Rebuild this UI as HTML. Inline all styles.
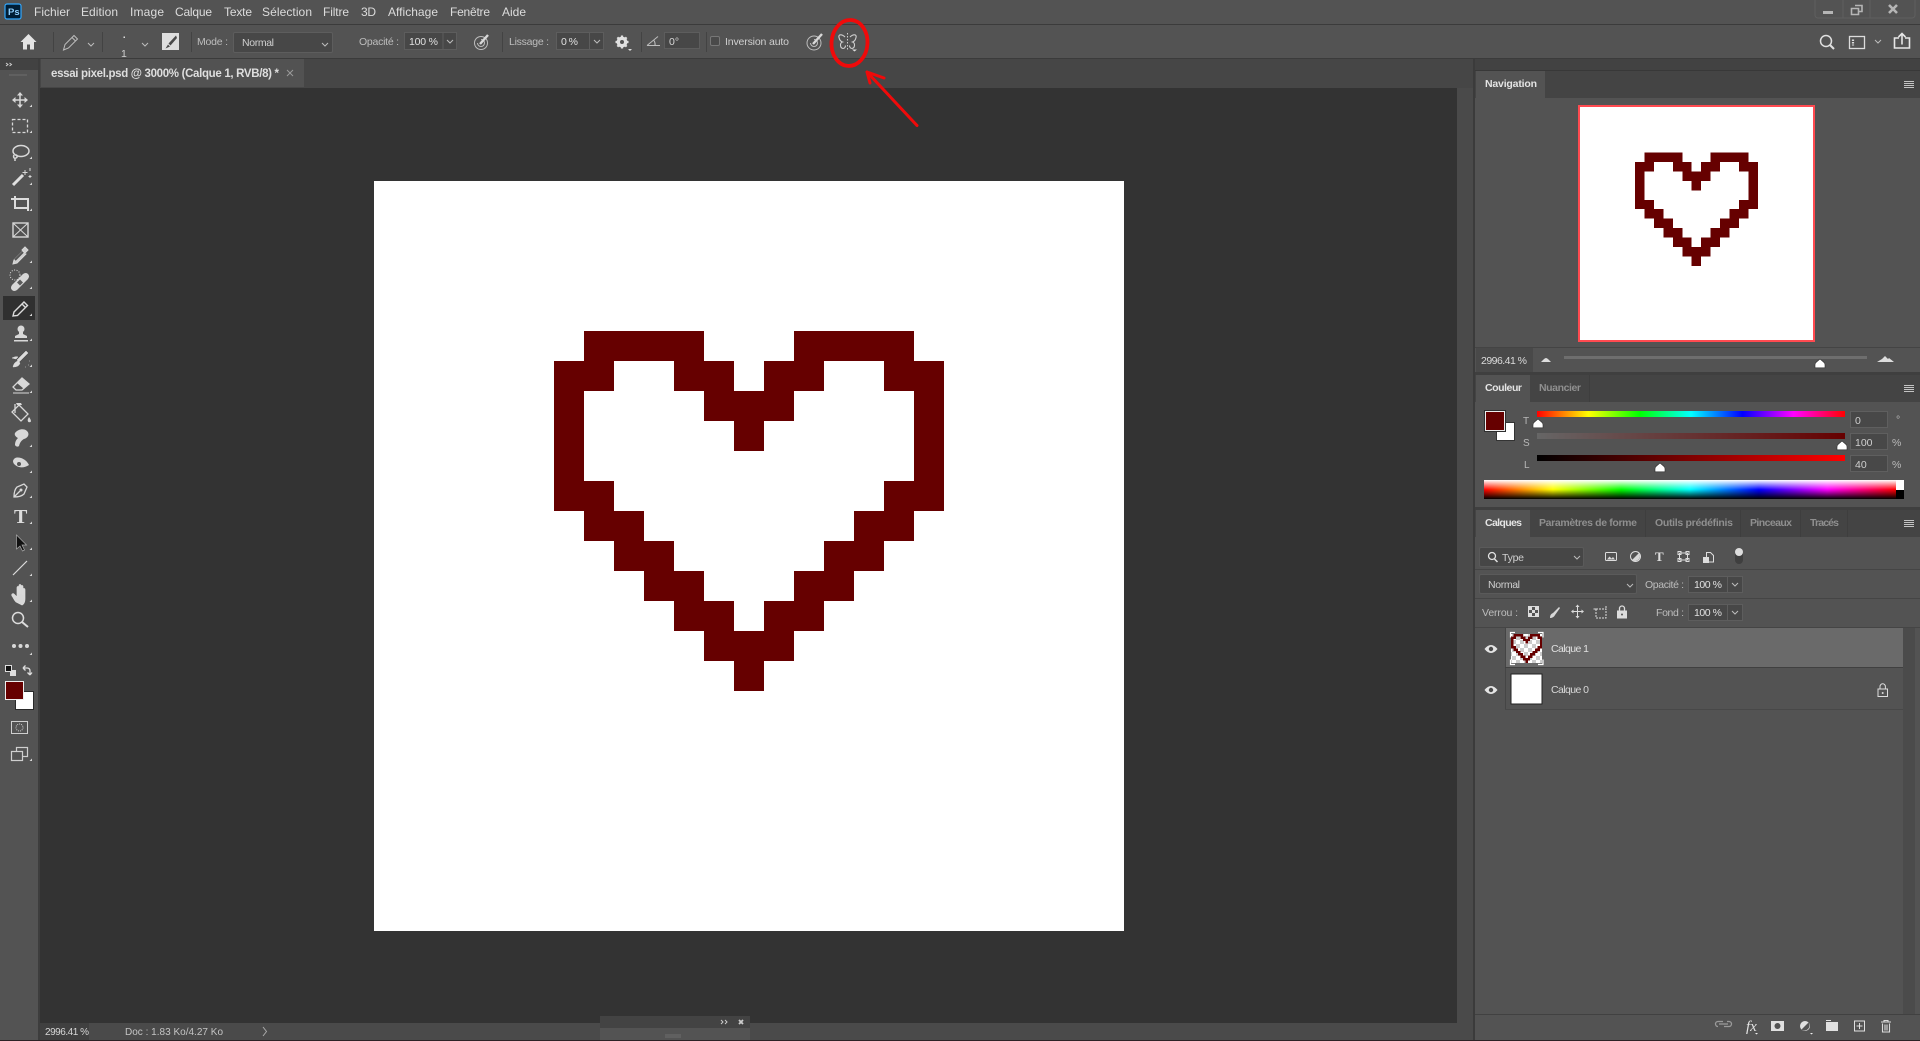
<!DOCTYPE html>
<html lang="fr"><head><meta charset="utf-8"><title>essai pixel.psd</title>
<style>
html,body{margin:0;padding:0;background:#535353;overflow:hidden}
svg{display:block;position:absolute;left:0;top:0}
text{font-family:"Liberation Sans",sans-serif;font-size:11px;fill:#cfcfcf;white-space:pre}
.m{font-size:12px;fill:#dcdcdc}
.b{font-weight:bold}
.d{fill:#8f8f8f;font-weight:bold;font-size:10.5px}
.i{fill:none;stroke:#d8d8d8;stroke-width:1.5}
.f{fill:#d8d8d8}
.c{fill:none;stroke:#bdbdbd;stroke-width:1}
</style></head><body>
<svg width="1920" height="1041" viewBox="0 0 1920 1041" xmlns="http://www.w3.org/2000/svg">
<defs>
<path id="h" shape-rendering="crispEdges" d="M1 0h4v1h-4zM8 0h4v1h-4zM0 1h2v1h-2zM4 1h2v1h-2zM7 1h2v1h-2zM11 1h2v1h-2zM0 2h1v1h-1zM5 2h3v1h-3zM12 2h1v1h-1zM0 3h1v1h-1zM6 3h1v1h-1zM12 3h1v1h-1zM0 4h1v1h-1zM12 4h1v1h-1zM0 5h2v1h-2zM11 5h2v1h-2zM1 6h2v1h-2zM10 6h2v1h-2zM2 7h2v1h-2zM9 7h2v1h-2zM3 8h2v1h-2zM8 8h2v1h-2zM4 9h2v1h-2zM7 9h2v1h-2zM5 10h3v1h-3zM6 11h1v1h-1z"/>
<linearGradient id="hue"><stop offset="0" stop-color="#f00"/><stop offset=".167" stop-color="#ff0"/><stop offset=".333" stop-color="#0f0"/><stop offset=".5" stop-color="#0ff"/><stop offset=".667" stop-color="#00f"/><stop offset=".833" stop-color="#f0f"/><stop offset="1" stop-color="#f00"/></linearGradient>
<linearGradient id="sat"><stop offset="0" stop-color="#666"/><stop offset="1" stop-color="#600"/></linearGradient>
<linearGradient id="lum"><stop offset="0" stop-color="#000"/><stop offset="1" stop-color="#f00"/></linearGradient>
<linearGradient id="wb" x1="0" y1="0" x2="0" y2="1"><stop offset="0" stop-color="#fff"/><stop offset=".5" stop-color="#fff" stop-opacity="0"/><stop offset=".5" stop-color="#000" stop-opacity="0"/><stop offset="1" stop-color="#000"/></linearGradient>
<pattern id="chk" width="8" height="8" patternUnits="userSpaceOnUse"><rect width="8" height="8" fill="#fff"/><rect width="4" height="4" fill="#ccc"/><rect x="4" y="4" width="4" height="4" fill="#ccc"/></pattern>
<path id="s" d="M0 0l-3.500 3q-1.500 1.200-1.500 2.800v3h10v-3q0-1.600-1.500-2.800z"/>
<g id="menu"><path d="M0 .5h10M0 2.500h10M0 4.500h10M0 6.500h10" stroke="#c4c4c4" fill="none"/></g>
</defs>

<rect width="1920" height="1041" fill="#535353"/>
<!-- bars -->
<rect y="24" width="1920" height="1" fill="#3b3b3b"/>
<rect y="58" width="1920" height="1" fill="#3b3b3b"/>
<rect y="59" width="38" height="11" fill="#424242"/>
<rect x="38" y="59" width="1435" height="29" fill="#464646"/>
<rect x="41" y="59" width="263" height="28" fill="#525252"/>
<rect x="38" y="59" width="2" height="982" fill="#3d3d3d"/>
<rect x="40" y="88" width="1417" height="935" fill="#333333"/>
<rect x="1457" y="88" width="16" height="952" fill="#4a4a4a"/>
<rect x="40" y="1023" width="1417" height="17" fill="#4a4a4a"/>
<rect x="40" y="1023" width="49" height="17" fill="#404040"/>
<rect x="1473" y="59" width="2" height="982" fill="#3b3b3b"/>
<rect y="1040" width="1920" height="1" fill="#2c2226"/>

<!-- canvas -->
<rect x="374" y="181" width="750" height="750" fill="#fff"/>
<use href="#h" transform="translate(554 331) scale(30)" fill="#660000"/>

<!-- title bar -->
<rect x="5" y="4" width="16" height="15" rx="2" fill="#001e36" stroke="#31a8ff" stroke-width="1.2"/>
<text x="8" y="15" style="font-size:9.5px;fill:#8fd0ff;font-weight:bold">Ps</text>
<g class="t">
<text class="m" x="34" y="16" textLength="36">Fichier</text>
<text class="m" x="81" y="16" textLength="37">Edition</text>
<text class="m" x="130" y="16" textLength="34">Image</text>
<text class="m" x="175" y="16" textLength="37">Calque</text>
<text class="m" x="224" y="16" textLength="28">Texte</text>
<text class="m" x="262" y="16" textLength="50">Sélection</text>
<text class="m" x="323" y="16" textLength="26">Filtre</text>
<text class="m" x="361" y="16" textLength="15">3D</text>
<text class="m" x="388" y="16" textLength="50">Affichage</text>
<text class="m" x="450" y="16" textLength="40">Fenêtre</text>
<text class="m" x="502" y="16" textLength="24">Aide</text>
</g>
<!-- window buttons -->
<path d="M1815 0v15a3 3 0 0 0 3 3h94a3 3 0 0 0 3-3v-15M1843 0v18M1870 0v18" fill="none" stroke="#5f5f5f"/>
<rect x="1823" y="11" width="10" height="3" fill="#b5b5b5"/>
<path d="M1855 5.5h7v6h-3M1851.5 8.5h7v6h-7z" fill="none" stroke="#b5b5b5" stroke-width="1.6"/>
<path d="M1889 5l8 8M1897 5l-8 8" stroke="#b5b5b5" stroke-width="2.6" fill="none"/>

<!-- options bar -->
<path d="M28.5 34L20.5 42H23V49.5H27V44.5H30V49.5H34V42H36.5Z" fill="#e4e4e4"/>
<path d="M53.5 32v20M102.5 32v20M191.5 32v20M502.5 32v20M641.5 32v20M706.5 32v20" stroke="#434343"/>
<path d="M63.5 50L65 44.5L74 35.5L77.5 39L68.5 48Z M72 37.5l3.5 3.5" class="c" stroke-width="1.2"/>
<path d="M88 43l3 3 3-3M142 43l3 3 3-3" class="c"/>
<rect x="123.5" y="36.5" width="1.5" height="1.5" fill="#ddd"/>
<text x="121" y="57" style="font-size:10.5px">1</text>
<rect x="162" y="33" width="17" height="17" fill="#dedede"/>
<path d="M176 35.5L168.5 43.5L170.5 45.5L177 38Z M168 44.5l2 2-4.5 2z" fill="#4a4a4a"/>
<text x="197" y="45" textLength="31" style="fill:#bdbdbd;font-size:10.5px">Mode :</text>
<rect x="233.5" y="32.5" width="99" height="20" rx="1.5" fill="#474747" stroke="#5d5d5d"/>
<text x="242" y="46" textLength="32" style="font-size:10.5px">Normal</text>
<path d="M322 43l3 3 3-3" class="c"/>
<text x="359" y="45" textLength="40" style="fill:#bdbdbd;font-size:10.5px">Opacité :</text>
<rect x="404.5" y="32.5" width="52" height="17" fill="#474747" stroke="#5d5d5d"/>
<path d="M443 33v16" stroke="#5d5d5d"/>
<text x="409" y="45" textLength="29" style="font-size:10.5px;fill:#e0e0e0">100 %</text>
<path d="M447 40l3 3 3-3" class="c"/>
<circle cx="481" cy="43" r="6.5" class="c" stroke-width="1.4"/><path d="M477.5 43a3.5 3.5 0 1 0 3.5-3.5" class="c"/>
<path d="M480 44L488 35" stroke="#d8d8d8" stroke-width="2.4" fill="none"/>
<text x="509" y="45" textLength="40" style="fill:#bdbdbd;font-size:10.5px">Lissage :</text>
<rect x="556.5" y="32.5" width="47" height="17" fill="#474747" stroke="#5d5d5d"/>
<path d="M589.5 33v16" stroke="#5d5d5d"/>
<text x="561" y="45" textLength="17" style="font-size:10.5px;fill:#e0e0e0">0 %</text>
<path d="M594 40l3 3 3-3" class="c"/>
<circle cx="622" cy="42" r="3.8" fill="none" stroke="#e0e0e0" stroke-width="3.2"/>
<path d="M622 35.5v13M615.5 42h13M617.4 37.4l9.2 9.2M626.6 37.4l-9.2 9.2" stroke="#e0e0e0" stroke-width="2.2"/>
<circle cx="622" cy="42" r="2" fill="#535353"/>
<path d="M628 49h4l-2 2z" fill="#ddd"/>
<path d="M647 45.5h13M647 45.5L658 36.5M654 40.5q1.5 2.5 1 5" class="c"/>
<rect x="664.5" y="32.5" width="35" height="16" fill="#474747" stroke="#5d5d5d"/>
<text x="669" y="45" style="font-size:10.5px;fill:#d8d8d8">0°</text>
<rect x="710.5" y="36.5" width="9" height="9" rx="1.5" fill="#4a4a4a" stroke="#777"/>
<text x="725" y="45" textLength="64" style="font-size:10.5px">Inversion auto</text>
<circle cx="814" cy="43" r="7" class="c" stroke-width="1.4"/><path d="M810.5 43a3.5 3.5 0 1 0 3.5-3.5" class="c"/>
<path d="M813 44L822 34" stroke="#d8d8d8" stroke-width="2.4" fill="none"/>
<path d="M847.5 33v18" stroke="#ccc" stroke-dasharray="1.5 1.5"/>
<path d="M845 37C842 34 838 34 839 37.5C839.5 40 841 41.5 842.5 42C839.5 43 840 48 843 48.5C844.5 48.5 845.5 47 845.5 45.5M850 37C853 34 857 34 856 37.5C855.5 40 854 41.5 852.5 42C855.5 43 855 48 852 48.5C850.5 48.5 849.5 47 849.5 45.5" fill="none" stroke="#cfcfcf" stroke-width="1.1"/>
<path d="M852 49.5h5l-2.5 2z" fill="#ddd"/>
<!-- right options -->
<circle cx="1826" cy="41" r="5.5" fill="none" stroke="#e0e0e0" stroke-width="1.5"/><path d="M1830 45l4 4" stroke="#e0e0e0" stroke-width="2"/>
<rect x="1849.5" y="36.5" width="15" height="12" fill="none" stroke="#dcdcdc" stroke-width="1.3"/><path d="M1853 39.5v6" stroke="#dcdcdc" stroke-width="2.2" stroke-dasharray="1.5 1"/>
<path d="M1875 40l3 3 3-3" class="c"/>
<path d="M1899 38h-4.500v10h15v-10h-4.500M1902 44.500v-11M1898.500 37l3.500-3.500 3.500 3.500" fill="none" stroke="#e6e6e6" stroke-width="1.6"/>

<!-- tab -->
<text x="51" y="77" class="b" textLength="228" style="font-size:11.5px;fill:#dedede">essai pixel.psd @ 3000% (Calque 1, RVB/8) *</text>
<path d="M287 70l6 6M293 70l-6 6" stroke="#9a9a9a"/>

<!-- collapse arrows -->
<path d="M6 63l2 1.500-2 1.500M9.500 63l2 1.500-2 1.500M1906 62l2.500 2.500-2.500 2.500M1910 62l2.500 2.500-2.500 2.500" stroke="#cfcfcf" fill="none"/>
<path d="M10 74v2M12 74v2M14 74v2M16 74v2M18 74v2M20 74v2M22 74v2M24 74v2M26 74v2" stroke="#6c6c6c"/>

<!-- toolbar -->
<rect x="3" y="296" width="32" height="24" fill="#303030"/>
<g class="f" stroke="none">
<path d="M32 107h-2.500l2.500-2.500z M32 133h-2.500l2.500-2.500z M32 159h-2.500l2.500-2.500z M32 185h-2.500l2.500-2.500z M32 211h-2.500l2.500-2.500z M32 263h-2.500l2.500-2.500z M32 289h-2.500l2.500-2.500z M32 316h-2.500l2.500-2.500z M32 341h-2.500l2.500-2.500z M32 367h-2.500l2.500-2.500z M32 393h-2.500l2.500-2.500z M32 447h-2.500l2.500-2.500z M32 473h-2.500l2.500-2.500z M32 498h-2.500l2.500-2.500z M32 524h-2.500l2.500-2.500z M32 550h-2.500l2.500-2.500z M32 576h-2.500l2.500-2.500z M32 602h-2.500l2.500-2.500z M32 655h-2.500l2.500-2.500z M32 761h-2.500l2.500-2.500z"/>
</g>
<!-- move -->
<path d="M20 93v14M13 100h14" class="i"/><path d="M20 92l-3 3.500h6zM20 108l-3-3.500h6zM12 100l3.500-3v6zM28 100l-3.500-3v6z" class="f"/>
<!-- marquee -->
<rect x="12.500" y="119.500" width="15" height="13" fill="none" stroke="#d8d8d8" stroke-width="1.300" stroke-dasharray="3 2"/>
<!-- lasso -->
<ellipse cx="21" cy="151" rx="8" ry="5.500" class="i" stroke-width="1.300"/><path d="M14 155c-1 2 0 4 2 3s1-3 0-3M15 158v3" class="i" stroke-width="1.100"/>
<!-- wand -->
<path d="M13 185l10-10" stroke="#e0e0e0" stroke-width="3"/><path d="M25 170v5M22.500 172.500h5M30 175v3M28.500 176.500h3M30 168v3" stroke="#d8d8d8"/>
<!-- crop -->
<path d="M11 199h17v12M15 196v12h13" fill="none" stroke="#dcdcdc" stroke-width="2"/>
<!-- frame -->
<rect x="13" y="223" width="15" height="14" fill="none" stroke="#d8d8d8" stroke-width="1.400"/><path d="M13 223l15 14M28 223l-15 14" stroke="#d8d8d8"/>
<!-- eyedropper -->
<path d="M13 264l1-4 9-9 3 3-9 9zM22 250l3-3 3 3-3 3z" fill="#cfcfcf" stroke="#d8d8d8"/><path d="M15 260l8-8" stroke="#535353" stroke-width="2"/>
<!-- heal -->
<path d="M12 285l11-11q3-2 5 0t0 5l-11 11q-3 2-5 0t0-5z" class="f"/>
<circle cx="15" cy="275" r="5" fill="none" stroke="#ddd" stroke-dasharray="1 1.500"/>
<path d="M17 282.500l3-3 3 3-3 3z" fill="#5a5a5a"/>
<!-- pencil active -->
<path d="M13 316L14 312L24 302L27.500 305.500L17.500 315.500Z M22 304l3.500 3.500" fill="none" stroke="#dcdcdc" stroke-width="1.400"/>
<!-- stamp -->
<circle cx="21" cy="329" r="3.500" class="f"/><path d="M19 332h4v2l4 2v2h-12v-2l4-2zM14 340h14v1.500h-14z" class="f"/>
<!-- mixer -->
<path d="M28 353L19 362L17 360L26 351Z M13 367q1-5 5-6l2 2q-1 4-7 4zM12 358q4-2 6-1l-2 2zM25 367h1M28 365h1M29 361h1" fill="#dcdcdc" stroke="#dcdcdc" stroke-width=".5"/>
<!-- eraser -->
<path d="M22 378L29 384L22 390H16L13 387Z" fill="none" stroke="#d8d8d8" stroke-width="1.300"/><path d="M22 378L29 384L24 389L17 383Z" class="f"/><path d="M13 393h16" stroke="#d8d8d8"/>
<!-- bucket -->
<path d="M19 405L28 414L21 421L12 412Z" fill="none" stroke="#d8d8d8" stroke-width="1.300"/><path d="M15 404v9" stroke="#d8d8d8" stroke-width="1.300"/><path d="M29 417q-2 3-1 4.500t3 0q0-2-2-4.500z" class="f"/><path d="M16 403h5l1 2h-5z" class="f"/>
<!-- smudge -->
<path d="M15 433c3-4 9-5 12-2s1 7-3 8c-2 1-4 3-5 7-1 1-3 1-4-1 0-3 1-5 3-7-2-1-4-3-3-5z" class="f"/>
<!-- sponge -->
<path d="M13 461c1-4 5-4 8-3s6 3 8 7c-3 2-7 3-10 2s-6-3-6-6z" class="f"/><circle cx="19" cy="464" r="2" fill="#555"/>
<!-- pen -->
<path d="M14 497c0-4 1-8 3-10l7-3 3 3-3 7c-2 2-6 3-10 3z M14 497l6-6" fill="none" stroke="#d8d8d8" stroke-width="1.300"/><circle cx="21" cy="490" r="1.500" class="f"/>
<!-- T -->
<text x="14" y="523" style="font-family:'Liberation Serif',serif;font-size:20px;font-weight:bold;fill:#dcdcdc">T</text>
<!-- arrow black -->
<path d="M16.500 535v14l3.500-3 2.500 5 2-1-2.500-5h4.500z" fill="#111" stroke="#aaa" stroke-width=".7"/>
<!-- line -->
<path d="M13 575l14-14" stroke="#dcdcdc" stroke-width="1.200"/>
<!-- hand -->
<path d="M16 602c-2-2-3-5-4-6-1-2 1-3 2-2l3 3v-9c0-2 2-2 2 0v6-8c0-2 2-2 2 0v8-7c0-2 2-2 2 0v8-5c0-2 2-2 2 0v9c0 3-1 5-3 6z" class="f" stroke="#dcdcdc" stroke-width=".7"/>
<!-- zoom -->
<circle cx="18" cy="618" r="5.500" fill="none" stroke="#dcdcdc" stroke-width="1.500"/><path d="M22 622l6 5" stroke="#dcdcdc" stroke-width="2"/>
<!-- dots -->
<circle cx="14" cy="646" r="2" class="f"/><circle cx="20.500" cy="646" r="2" class="f"/><circle cx="27" cy="646" r="2" class="f"/>
<!-- default colours -->
<rect x="10" y="670" width="6" height="6" fill="#ddd"/><rect x="5.500" y="665.500" width="6" height="6" fill="#111" stroke="#ddd"/>
<path d="M23 668h4q3 0 3 3v3M23 668l2.500-2.500M23 668l2.500 2.500M30 675l-2.500-2.500M30 675l2-2.500" fill="none" stroke="#dcdcdc" stroke-width="1.300"/>
<rect x="15.500" y="691.500" width="18" height="18" fill="#fff" stroke="#2a2a2a"/>
<rect x="5.500" y="681.500" width="18" height="18" fill="#660000" stroke="#eee"/>
<!-- mask -->
<rect x="11.500" y="721.500" width="16" height="12" fill="none" stroke="#cfcfcf"/><circle cx="19.500" cy="727.500" r="3.500" fill="none" stroke="#cfcfcf" stroke-dasharray="1 1"/>
<!-- screen -->
<rect x="16.500" y="747.500" width="11" height="9" fill="none" stroke="#cfcfcf" stroke-width="1.200"/><rect x="11.500" y="751.500" width="11" height="9" fill="#535353" stroke="#cfcfcf" stroke-width="1.200"/>

<!-- status bar -->
<text x="45" y="1035" textLength="44" style="font-size:10px;fill:#d6d6d6">2996.41 %</text>
<text x="125" y="1035" textLength="98" style="font-size:10px;fill:#c4c4c4">Doc : 1.83 Ko/4.27 Ko</text>
<path d="M263 1027l3.500 4.500-3.500 4.500" fill="none" stroke="#aaa"/>
<!-- timeline collapsed -->
<rect x="600" y="1016" width="150" height="24" fill="#535353"/>
<rect x="600" y="1016" width="150" height="12" fill="#434343"/>
<path d="M721 1020l2 2-2 2M725 1020l2 2-2 2" stroke="#ccc" fill="none"/>
<path d="M739 1020l4 4M743 1020l-4 4" stroke="#ccc" stroke-width="1.800"/>
<path d="M666 1034v4M668 1034v4M670 1034v4M672 1034v4M674 1034v4M676 1034v4M678 1034v4M680 1034v4" stroke="#6c6c6c"/>

<!-- right dock -->
<rect x="1475" y="59" width="445" height="11" fill="#424242"/>
<rect x="1475" y="70" width="445" height="1" fill="#383838"/>
<rect x="1475" y="71" width="445" height="27" fill="#444444"/>
<rect x="1476" y="71" width="69" height="28" fill="#535353"/>
<text x="1485" y="87" class="b" textLength="52" style="font-size:10.500px;fill:#e4e4e4">Navigation</text>
<use href="#menu" x="1904" y="81"/>
<!-- navigator -->
<rect x="1579" y="106" width="235" height="235" fill="#fff" stroke="#ff4a50" stroke-width="2"/>
<use href="#h" transform="translate(1635 152.500) scale(9.450)" fill="#660000"/>
<rect x="1475" y="347" width="445" height="1" fill="#444"/>
<rect x="1476" y="348" width="57" height="24" fill="#494949"/>
<text x="1481" y="364" textLength="46" style="font-size:10.500px;fill:#dcdcdc">2996.41 %</text>
<path d="M1541 362l2.500-2.500q1.500-1.500 2.500-1.500t2.500 1.500l2.500 2.500z" fill="#ddd"/>
<rect x="1564" y="356" width="303" height="3" fill="#6e6e6e"/>
<use href="#s" x="1820" y="359" fill="#fff" stroke="#2c2c2c" stroke-width=".6"/>
<path d="M1877 362l5-3 3-3 3 3 1-1 5 4z" fill="#ddd"/>
<rect x="1475" y="372" width="445" height="3" fill="#3f3f3f"/>
<!-- colour -->
<rect x="1475" y="375" width="445" height="27" fill="#444444"/>
<rect x="1476" y="375" width="54" height="28" fill="#535353"/>
<text x="1485" y="391" class="b" textLength="37" style="font-size:10.500px;fill:#e4e4e4">Couleur</text>
<text x="1539" y="391" class="d" textLength="42">Nuancier</text>
<path d="M1589.500 375v27" stroke="#3e3e3e"/>
<use href="#menu" x="1904" y="385"/>
<rect x="1496.500" y="422.500" width="18" height="18" fill="#fff" stroke="#333"/>
<rect x="1485.500" y="411.500" width="19" height="19" fill="#660000" stroke="#eee"/>
<rect x="1484.500" y="410.500" width="21" height="21" fill="none" stroke="#2e2e2e"/>
<text x="1523" y="424" style="font-size:10px;fill:#b8b8b8">T</text>
<text x="1523" y="446" style="font-size:10px;fill:#b8b8b8">S</text>
<text x="1524" y="468" style="font-size:10px;fill:#b8b8b8">L</text>
<rect x="1537" y="411" width="308" height="6" fill="url(#hue)"/>
<rect x="1537" y="433" width="308" height="6" fill="url(#sat)"/>
<rect x="1537" y="455" width="308" height="6" fill="url(#lum)"/>
<use href="#s" x="1538" y="419" fill="#fff" stroke="#2c2c2c" stroke-width=".6"/>
<use href="#s" x="1842" y="441" fill="#fff" stroke="#2c2c2c" stroke-width=".6"/>
<use href="#s" x="1660" y="463" fill="#fff" stroke="#2c2c2c" stroke-width=".6"/>
<g fill="#484848" stroke="#5f5f5f"><rect x="1850.500" y="411.500" width="37" height="16"/><rect x="1850.500" y="433.500" width="37" height="16"/><rect x="1850.500" y="455.500" width="37" height="16"/></g>
<g style="font-size:10px"><text x="1855" y="424" style="font-size:10.500px">0</text><text x="1855" y="446" style="font-size:10.500px">100</text><text x="1855" y="468" style="font-size:10.500px">40</text><text x="1896" y="423" style="font-size:10.500px;fill:#bbb">°</text><text x="1892" y="446" style="font-size:10.500px;fill:#bbb">%</text><text x="1892" y="468" style="font-size:10.500px;fill:#bbb">%</text></g>
<rect x="1484" y="480" width="412" height="19" fill="url(#hue)"/>
<rect x="1484" y="480" width="412" height="19" fill="url(#wb)"/>
<rect x="1896" y="480" width="8" height="10" fill="#fff"/><rect x="1896" y="490" width="8" height="9" fill="#000"/>
<rect x="1475" y="507" width="445" height="3" fill="#3f3f3f"/>
<!-- layers tabs -->
<rect x="1475" y="510" width="445" height="27" fill="#444444"/>
<rect x="1476" y="510" width="54" height="28" fill="#535353"/>
<text x="1485" y="526" class="b" textLength="37" style="font-size:10.500px;fill:#e4e4e4">Calques</text>
<text x="1539" y="526" class="d" textLength="98">Paramètres de forme</text>
<text x="1655" y="526" class="d" textLength="78">Outils prédéfinis</text>
<text x="1750" y="526" class="d" textLength="42">Pinceaux</text>
<text x="1810" y="526" class="d" textLength="29">Tracés</text>
<path d="M1645.500 510v27M1740.500 510v27M1800.500 510v27M1847.500 510v27" stroke="#3e3e3e"/>
<use href="#menu" x="1904" y="520"/>
<!-- filter row -->
<rect x="1479.500" y="547.500" width="104" height="19" rx="1.500" fill="#464646" stroke="#5a5a5a"/>
<circle cx="1492" cy="556" r="3.500" fill="none" stroke="#e0e0e0" stroke-width="1.300"/><path d="M1494.500 559l3 3" stroke="#e0e0e0" stroke-width="1.500"/>
<text x="1502" y="561" textLength="22" style="font-size:10.500px">Type</text>
<path d="M1574 556l3 3 3-3" class="c"/>
<rect x="1605.500" y="552.500" width="11" height="8" rx="1" fill="none" stroke="#ddd"/><path d="M1607 559.500l2.500-3 2 2 1.500-1.500 2 2.500z" class="f"/>
<circle cx="1635.500" cy="556.500" r="5" fill="none" stroke="#ddd"/><path d="M1639 553a5 5 0 0 1-7 7z" class="f"/>
<text x="1655" y="561" class="b" style="font-family:'Liberation Serif',serif;font-size:13px;fill:#e0e0e0">T</text>
<path d="M1679.500 553h8M1679.500 560h8M1679.500 553v7M1687.500 553v7" fill="none" stroke="#ddd"/><path d="M1678 551.500h3v3h-3zM1686 551.500h3v3h-3zM1678 558.500h3v3h-3zM1686 558.500h3v3h-3z" fill="none" stroke="#ddd"/>
<path d="M1706.500 552.500h4l3 3v6.500h-7z" fill="none" stroke="#ddd"/><rect x="1703" y="557" width="6" height="6" fill="#ddd"/>
<rect x="1735" y="548" width="8" height="16" rx="4" fill="#3f3f3f"/><circle cx="1739" cy="552" r="4" fill="#ddd"/>
<rect x="1475" y="569" width="445" height="1" fill="#454545"/>
<!-- blend row -->
<rect x="1479.500" y="574.500" width="157" height="19" rx="1.500" fill="#464646" stroke="#5a5a5a"/>
<text x="1488" y="588" textLength="32" style="font-size:10.500px">Normal</text>
<path d="M1627 584l3 3 3-3" class="c"/>
<text x="1645" y="588" textLength="39" style="font-size:10.500px;fill:#bdbdbd">Opacité :</text>
<rect x="1688.500" y="576.500" width="54" height="16" fill="#474747" stroke="#5d5d5d"/><path d="M1727.500 577v15" stroke="#5d5d5d"/>
<text x="1694" y="588" textLength="28" style="font-size:10.500px;fill:#e0e0e0">100 %</text>
<path d="M1732 583l3 3 3-3" class="c"/>
<rect x="1475" y="598" width="445" height="1" fill="#454545"/>
<!-- lock row -->
<text x="1482" y="616" textLength="36" style="font-size:10.500px;fill:#bdbdbd">Verrou :</text>
<rect x="1528.500" y="606.500" width="10" height="10" fill="none" stroke="#ddd"/><path d="M1529 607h3v3h-3zM1535 607h3v3h-3zM1532 610h3v3h-3zM1529 613h3v3h-3zM1535 613h3v3h-3z" fill="#ddd"/>
<path d="M1550 618c0-3 1-4 3-5l6-6 1 1-5 7c-1 2-3 3-5 3z" class="f"/>
<path d="M1577.500 606v11M1572 611.500h11" stroke="#ddd"/><path d="M1577.500 604.500l-2 2.500h4zM1577.500 618.500l-2-2.500h4zM1571 611.500l2.500-2v4zM1584 611.500l-2.500-2v4z" class="f"/>
<path d="M1596 609h10v9h-10zM1593.500 609h4M1606 606v2" fill="none" stroke="#ddd" stroke-dasharray="2 1"/>
<path d="M1619.500 611v-2.500a2.500 2.500 0 0 1 5 0v2.500" fill="none" stroke="#ddd" stroke-width="1.300"/><rect x="1617" y="610.500" width="10" height="8" fill="#ddd"/><circle cx="1622" cy="614.500" r="1" fill="#535353"/>
<text x="1656" y="616" textLength="28" style="font-size:10.500px;fill:#bdbdbd">Fond :</text>
<rect x="1688.500" y="604.500" width="54" height="16" fill="#474747" stroke="#5d5d5d"/><path d="M1727.500 605v15" stroke="#5d5d5d"/>
<text x="1694" y="616" textLength="28" style="font-size:10.500px;fill:#e0e0e0">100 %</text>
<path d="M1732 611l3 3 3-3" class="c"/>
<rect x="1475" y="627" width="445" height="1" fill="#454545"/>
<!-- layers -->
<rect x="1903" y="628" width="12" height="386" fill="#4b4b4b"/>
<rect x="1505" y="628" width="398" height="39" fill="#6a6a6a"/>
<path d="M1505.500 628v81" stroke="#454545"/>
<rect x="1505" y="667" width="398" height="1" fill="#404040"/>
<rect x="1505" y="709" width="398" height="1" fill="#484848"/>
<path d="M1484.500 649q6.500-8 13 0q-6.500 8-13 0z" fill="#e4e4e4"/><circle cx="1491" cy="649" r="2.200" fill="#4a4a4a"/>
<path d="M1484.500 690q6.500-8 13 0q-6.500 8-13 0z" fill="#e4e4e4"/><circle cx="1491" cy="690" r="2.200" fill="#4a4a4a"/>
<rect x="1511" y="634" width="31" height="29" fill="url(#chk)"/>
<use href="#h" transform="translate(1511 634) scale(2.400)" fill="#660000"/>
<path d="M1515 632.500h-4.500v5M1538 632.500h5v5M1515 664.500h-4.500v-5M1538 664.500h5v-5" fill="none" stroke="#fff" stroke-width="1.200"/>
<text x="1551" y="652" textLength="38" style="font-size:10.500px;fill:#e0e0e0">Calque 1</text>
<rect x="1511" y="674" width="31" height="30" fill="#fff" stroke="#222"/>
<text x="1551" y="693" textLength="38" style="font-size:10.500px;fill:#d8d8d8">Calque 0</text>
<path d="M1880 689v-2.500a2.700 2.700 0 0 1 5.400 0v2.500" fill="none" stroke="#ddd"/><rect x="1878" y="689" width="9.500" height="7.500" fill="none" stroke="#ddd"/><circle cx="1882.700" cy="693" r="1" fill="#ddd"/>
<!-- bottom -->
<rect x="1475" y="1014" width="445" height="1" fill="#414141"/>
<path d="M1721 1026.500a2.500 2.500 0 0 1 0-5h5M1730 1021.500h2a2.500 2.500 0 0 1 0 5h-5M1722 1024h9" transform="translate(-3 0)" fill="none" stroke="#9a9a9a" stroke-width="1.300"/>
<text x="1746" y="1031" style="font-family:'Liberation Serif',serif;font-style:italic;font-size:15px;fill:#e4e4e4">fx</text>
<path d="M1755 1033h3l-1.500 1.500z" fill="#eee"/>
<rect x="1771" y="1021" width="13" height="10" fill="#e0e0e0"/><circle cx="1777.500" cy="1026" r="3" fill="#535353"/>
<circle cx="1805" cy="1026" r="5" fill="#e0e0e0"/><path d="M1808.500 1022.500a5 5 0 0 1-7 7z" fill="#535353"/>
<path d="M1810 1033h3l-1.500 1.500z" fill="#eee"/>
<path d="M1826 1022h12v9h-12zM1826 1021v-1h5v1z" fill="#e0e0e0"/>
<rect x="1854.500" y="1021" width="10" height="10" fill="none" stroke="#e0e0e0"/><path d="M1859.500 1023v6M1856.500 1026h6" stroke="#e0e0e0"/>
<path d="M1881 1022h10M1884 1022v-1.500h4v1.500M1882.500 1023.500v8.500h7v-8.500M1885 1024.500v6M1887 1024.500v6" fill="none" stroke="#dcdcdc" stroke-width="1.100"/>

<!-- red annotation -->
<ellipse cx="849.500" cy="43" rx="18" ry="23" fill="none" stroke="#f00a0a" stroke-width="3.800" transform="rotate(4 850 43)"/>
<path d="M917 125.500L867 72M867 72L884 78M867 72L870 83" fill="none" stroke="#f00a0a" stroke-width="3" stroke-linecap="round"/>
</svg>
</body></html>
